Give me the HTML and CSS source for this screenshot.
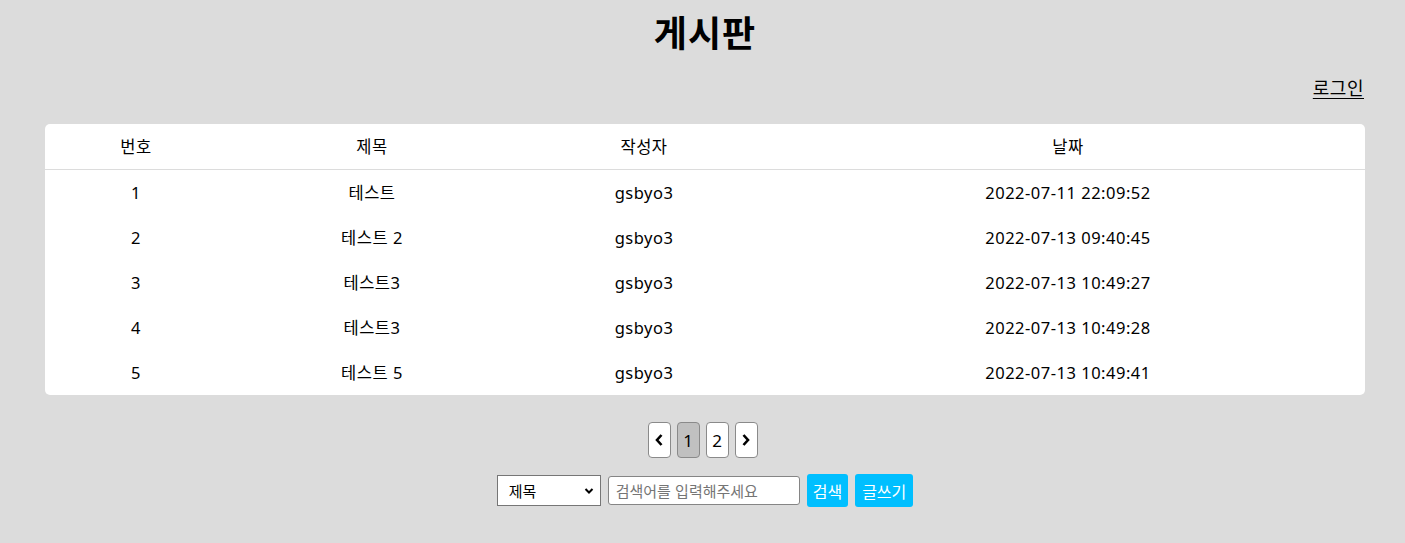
FILE: index.html
```html
<!DOCTYPE html>
<html lang="ko">
<head>
<meta charset="utf-8">
<title>게시판</title>
<link rel="stylesheet" href="styles.css">
</head>
<body>
<div class="page">
  <h1 class="title">게시판</h1>
  <div class="topbar"><a class="login" href="#">로그인</a></div>
  <div class="card">
    <table class="board">
      <colgroup>
        <col class="c1"><col class="c2"><col class="c3"><col class="c4">
      </colgroup>
      <thead>
        <tr><th>번호</th><th>제목</th><th>작성자</th><th>날짜</th></tr>
      </thead>
      <tbody>
        <tr><td>1</td><td>테스트</td><td>gsbyo3</td><td>2022-07-11 22:09:52</td></tr>
        <tr><td>2</td><td>테스트 2</td><td>gsbyo3</td><td>2022-07-13 09:40:45</td></tr>
        <tr><td>3</td><td>테스트3</td><td>gsbyo3</td><td>2022-07-13 10:49:27</td></tr>
        <tr><td>4</td><td>테스트3</td><td>gsbyo3</td><td>2022-07-13 10:49:28</td></tr>
        <tr><td>5</td><td>테스트 5</td><td>gsbyo3</td><td>2022-07-13 10:49:41</td></tr>
      </tbody>
    </table>
  </div>
  <div class="pager">
    <button class="pg arrow" type="button"><svg width="10" height="16" viewBox="0 0 10 16"><path d="M7.5 3 L3 8 L7.5 13" fill="none" stroke="#000" stroke-width="2.6"/></svg></button>
    <button class="pg active" type="button">1</button>
    <button class="pg" type="button">2</button>
    <button class="pg arrow" type="button"><svg width="10" height="16" viewBox="0 0 10 16"><path d="M2.5 3 L7 8 L2.5 13" fill="none" stroke="#000" stroke-width="2.6"/></svg></button>
  </div>
  <div class="search">
    <div class="select"><span>제목</span><svg width="10" height="8" viewBox="0 0 10 8"><path d="M1.5 2 L5 5.5 L8.5 2" fill="none" stroke="#000" stroke-width="2"/></svg></div>
    <input class="query" type="text" placeholder="검색어를 입력해주세요">
    <button class="btn" type="button">검색</button>
    <button class="btn wide" type="button">글쓰기</button>
  </div>
</div>
</body>
</html>
```
FILE: styles.css
```css
html, body {
  margin: 0;
  padding: 0;
  background: #dcdcdc;
}
body {
  font-family: "Noto Sans", "Noto Sans CJK KR", sans-serif;
  font-size: 16px;
  color: #000;
}
.page {
  padding: 0 40px 0 45px;
}
.title {
  margin: 0;
  padding-top: 7px;
  height: 54px;
  text-align: center;
  font-family: "Noto Sans CJK KR", sans-serif;
  font-size: 36px;
  font-weight: 700;
  line-height: 48px;
  letter-spacing: 1px;
}
.topbar {
  display: flex;
  justify-content: flex-end;
  padding-top: 15px;
  height: 46px;
  box-sizing: border-box;
  padding-right: 1px;
}
.login {
  color: #000;
  font-size: 18px;
  line-height: 24px;
  letter-spacing: 0.5px;
  text-decoration: underline;
  text-underline-offset: 3px;
}
.card {
  margin-top: 17px;
  background: #fff;
  border-radius: 5px;
  overflow: hidden;
}
.board {
  width: 100%;
  border-collapse: collapse;
  table-layout: fixed;
  font-size: 16.5px;
  letter-spacing: 0.5px;
}
.c1 { width: 182px; }
.c2 { width: 290px; }
.c3 { width: 254px; }
.board th {
  font-weight: 400;
  height: 45px;
  padding: 0;
  border-bottom: 1px solid #dcdcdc;
  line-height: 22px;
}
.board td {
  text-align: center;
  height: 45px;
  padding: 0;
  line-height: 22px;
}
.pager {
  display: flex;
  justify-content: center;
  gap: 6px;
  margin-top: 27px;
  padding-right: 5px;
}
.pg {
  width: 23px;
  height: 36px;
  padding: 0;
  border: 1px solid #8a8a8a;
  border-radius: 4px;
  background: #fff;
  font-family: "Noto Sans", sans-serif;
  font-size: 17px;
  color: #000;
  display: flex;
  align-items: center;
  justify-content: center;
}
.pg.active {
  background: #c0c0c0;
}
.search {
  display: flex;
  justify-content: center;
  align-items: center;
  gap: 7px;
  margin-top: 16px;
}
.select {
  width: 104px;
  height: 31px;
  box-sizing: border-box;
  border: 1px solid #767676;
  background: #fff;
  display: flex;
  align-items: center;
  justify-content: space-between;
  padding: 0 6px 0 11px;
  font-family: "Noto Sans CJK KR", sans-serif;
  font-size: 15px;
}
.query {
  width: 192px;
  height: 29px;
  box-sizing: border-box;
  border: 1px solid #858585;
  border-radius: 3px;
  padding: 0 7px;
  font-family: "Noto Sans CJK KR", sans-serif;
  font-size: 15px;
  background: #fff;
}
.query::placeholder { color: #757575; }
.btn {
  height: 33px;
  padding: 0 6px;
  border: none;
  border-radius: 3px;
  background: #00bfff;
  color: #fff;
  font-family: "Noto Sans CJK KR", sans-serif;
  font-size: 16px;
}
.btn.wide {
  padding: 0 7px;
}
```
